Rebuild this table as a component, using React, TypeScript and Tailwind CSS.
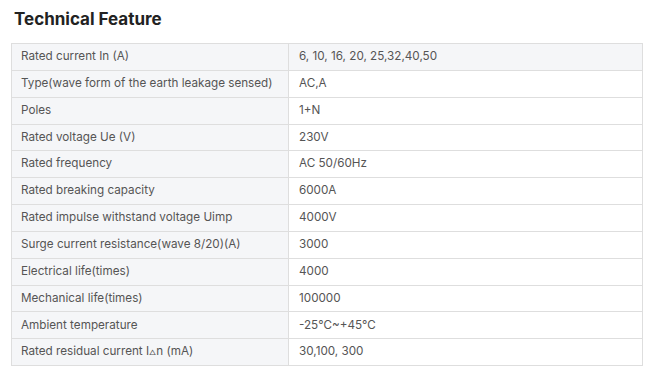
const rows: [string, React.ReactNode][] = [
  ["Rated current In (A)", "6, 10, 16, 20, 25,32,40,50"],
  ["Type(wave form of the earth leakage sensed)", "AC,A"],
  ["Poles", "1+N"],
  ["Rated voltage Ue (V)", "230V"],
  ["Rated frequency", "AC 50/60Hz"],
  ["Rated breaking capacity", "6000A"],
  ["Rated impulse withstand voltage Uimp", "4000V"],
  ["Surge current resistance(wave 8/20)(A)", "3000"],
  ["Electrical life(times)", "4000"],
  ["Mechanical life(times)", "100000"],
  ["Ambient temperature", "-25℃~+45℃"],
  ["Rated residual current I△n (mA)", "30,100, 300"],
];

function Label({ text }: { text: string }) {
  // the delta glyph is drawn small in the source page
  if (!text.includes("△")) return <>{text}</>;
  const [a, b] = text.split("△");
  return (
    <>
      {a}
      <span className="text-[7px]">△</span>
      {b}
    </>
  );
}

export default function App() {
  return (
    <div className="w-[650px] h-[373px] bg-white font-['Inter','Noto_Sans',sans-serif]">
      <h2 className="pl-[14px] pt-[8px] text-[17px] leading-[22px] font-bold text-[#222]">
        Technical Feature
      </h2>
      <table className="ml-[11px] mt-[13px] w-[632px] border-collapse text-[11.7px] text-[#555]">
        <tbody>
          {rows.map(([k, v], i) => (
            <tr key={k} className={i === 0 ? "bg-[#f5f6f8]" : ""}>
              <td className="w-[277px] h-[26.85px] border border-[#dedede] bg-[#f5f6f8] pl-[9px] py-0 leading-none">
                <Label text={k} />
              </td>
              <td className="h-[26.85px] border border-[#dedede] pl-[10px] py-0 leading-none">
                {v}
              </td>
            </tr>
          ))}
        </tbody>
      </table>
    </div>
  );
}
